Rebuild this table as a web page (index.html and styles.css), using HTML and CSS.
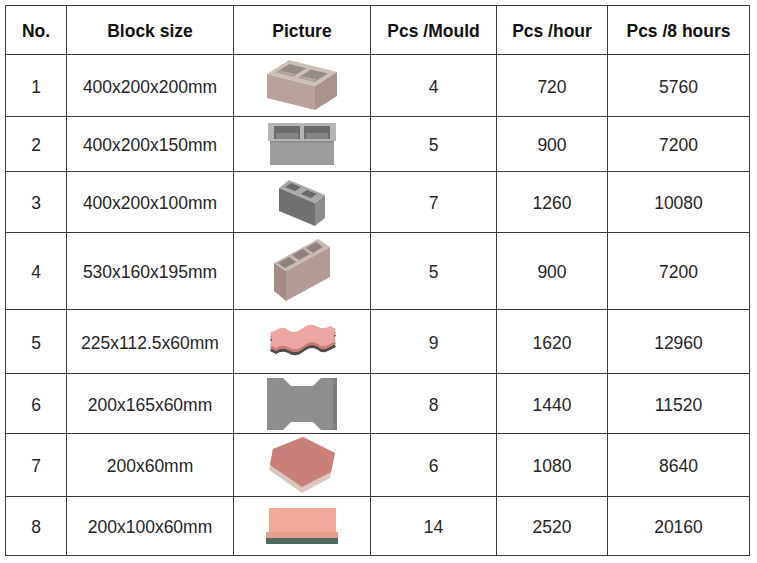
FILE: index.html
```html
<!DOCTYPE html>
<html>
<head>
<meta charset="utf-8">
<link rel="stylesheet" href="styles.css">
</head>
<body>
<table class="spec">
  <colgroup>
    <col class="c-no"><col class="c-size"><col class="c-pic"><col class="c-mould"><col class="c-hour"><col class="c-8h">
  </colgroup>
  <thead>
    <tr class="r-head"><th>No.</th><th>Block size</th><th>Picture</th><th>Pcs /Mould</th><th>Pcs /hour</th><th>Pcs /8 hours</th></tr>
  </thead>
  <tbody>
    <tr class="r1"><td>1</td><td>400x200x200mm</td><td class="pic">
      <svg width="74" height="52" viewBox="0 0 74 52">
        <polygon points="2,14 50,26 50,50 2,38" fill="#b7a39b"/>
        <polygon points="50,26 72,12 72,36 50,50" fill="#a8948d"/>
        <polygon points="2,14 50,26 72,12 24,0" fill="#cbbfb8"/>
        <polygon points="11.2,12.4 28,16.6 41.2,8.2 24.4,4" fill="#958c87"/>
        <polygon points="32.8,17.8 49.6,22 62.8,13.6 46,9.4" fill="#958c87"/>
        <polygon points="11.2,12.4 28,16.6 30,14 14,10" fill="#b0a69f"/>
        <polygon points="32.8,17.8 49.6,22 51.6,19.4 35,15.4" fill="#b0a69f"/>
      </svg></td><td>4</td><td>720</td><td>5760</td></tr>
    <tr class="r2"><td>2</td><td>400x200x150mm</td><td class="pic">
      <svg width="68" height="42" viewBox="0 0 68 42">
        <rect x="2" y="16" width="64" height="26" fill="#9d9d9d"/>
        <rect x="0" y="0" width="68" height="18" fill="#b4b4b4"/>
        <rect x="6" y="3" width="26" height="13" fill="#6b6b6b"/>
        <rect x="36" y="3" width="26" height="13" fill="#6b6b6b"/>
        <rect x="8" y="10" width="22" height="6" fill="#858585"/>
        <rect x="38" y="10" width="22" height="6" fill="#858585"/>
        <rect x="2" y="18" width="64" height="2" fill="#8e8e8e"/>
      </svg></td><td>5</td><td>900</td><td>7200</td></tr>
    <tr class="r3"><td>3</td><td>400x200x100mm</td><td class="pic">
      <svg width="46" height="48" viewBox="0 0 46 48">
        <polygon points="0,10 36,25 36,48 0,33" fill="#707070"/>
        <polygon points="36,25 46,17 46,40 36,48" fill="#8c8c8c"/>
        <polygon points="0,10 10,2 46,17 36,25" fill="#a9a9a9"/>
        <polygon points="6,9 12,5 22,9 16,13" fill="#6a6a6a"/>
        <polygon points="22,16 28,12 38,16 32,20" fill="#6a6a6a"/>
      </svg></td><td>7</td><td>1260</td><td>10080</td></tr>
    <tr class="r4"><td>4</td><td>530x160x195mm</td><td class="pic">
      <svg width="60" height="64" viewBox="0 0 60 64">
        <polygon points="2,24 14,32 14,62 2,52" fill="#a28c85"/>
        <polygon points="14,32 58,8 58,38 14,62" fill="#b39c95"/>
        <polygon points="2,24 46,0 58,8 14,32" fill="#c6b9b2"/>
        <polygon points="6,24 17,18 24,23 13,29" fill="#8d827d"/>
        <polygon points="20,16 31,10 38,15 27,21" fill="#8d827d"/>
        <polygon points="34,9 44,3 51,8 41,14" fill="#8d827d"/>
      </svg></td><td>5</td><td>900</td><td>7200</td></tr>
    <tr class="r5"><td>5</td><td>225x112.5x60mm</td><td class="pic">
      <svg width="72" height="38" viewBox="0 0 72 38">
        <path d="M4,16 L12,12 Q18,9 22,13 Q28,17 34,13 L40,9 Q46,6 52,10 Q58,13 64,9 L70,12 Q66,18 70,24 L62,28 Q56,31 52,27 Q46,23 40,27 L34,31 Q28,34 22,30 Q16,27 10,31 L4,28 Q8,22 4,16 Z" fill="#4e4a4a"/>
        <path d="M4,13 L12,9 Q18,6 22,10 Q28,14 34,10 L40,6 Q46,3 52,7 Q58,10 64,6 L70,9 Q66,15 70,21 L62,25 Q56,28 52,24 Q46,20 40,24 L34,28 Q28,31 22,27 Q16,24 10,28 L4,25 Q8,19 4,13 Z" fill="#c57d78"/>
        <path d="M4,10 L12,6 Q18,3 22,7 Q28,11 34,7 L40,3 Q46,0 52,4 Q58,7 64,3 L70,6 Q66,12 70,18 L62,22 Q56,25 52,21 Q46,17 40,21 L34,25 Q28,28 22,24 Q16,21 10,25 L4,22 Q8,16 4,10 Z" fill="#eda5a3"/>
      </svg></td><td>9</td><td>1620</td><td>12960</td></tr>
    <tr class="r6"><td>6</td><td>200x165x60mm</td><td class="pic">
      <svg width="70" height="52" viewBox="0 0 70 52">
        <path d="M0,0 L16,0 L24,8 L46,8 L54,0 L70,0 L70,52 L54,52 L46,44 L24,44 L16,52 L0,52 Z" fill="#8e8e8e"/>
        <path d="M66,0 L70,0 L70,52 L66,52 Z" fill="#7d7d7d"/>
      </svg></td><td>8</td><td>1440</td><td>11520</td></tr>
    <tr class="r7"><td>7</td><td>200x60mm</td><td class="pic">
      <svg width="66" height="56" viewBox="0 0 66 56">
        <polygon points="34,0 66,16 61,41 33,56 0,33 4,12" fill="#dcc6bf"/>
        <polygon points="34,0 66,16 62,35 33,50 1,28 4,12" fill="#c97f7a"/>
      </svg></td><td>6</td><td>1080</td><td>8640</td></tr>
    <tr class="r8"><td>8</td><td>200x100x60mm</td><td class="pic">
      <svg width="72" height="36" viewBox="0 0 72 36">
        <rect x="3" y="0" width="67" height="25" fill="#f0a898"/>
        <rect x="0" y="24" width="72" height="6" fill="#e59e8f"/>
        <rect x="0" y="30" width="72" height="6" fill="#51685f"/>
      </svg></td><td>14</td><td>2520</td><td>20160</td></tr>
  </tbody>
</table>
</body>
</html>
```

FILE: styles.css
```css
html, body {
  margin: 0;
  padding: 0;
  background: #ffffff;
}
body {
  padding: 5px 0 0 5px;
  font-family: "Liberation Sans", Arial, sans-serif;
  color: #262626;
}
.spec {
  border-collapse: collapse;
  table-layout: fixed;
  width: 745px;
}
.spec th, .spec td {
  border: 1px solid #3c3c3c;
  padding: 3px 0 0 0;
  text-align: center;
  vertical-align: middle;
  font-size: 17.5px;
}
.spec td.pic {
  padding: 0;
}
.spec th {
  font-weight: bold;
  color: #111111;
}
.c-no { width: 61px; }
.c-size { width: 167px; }
.c-pic { width: 137px; }
.c-mould { width: 126px; }
.c-hour { width: 111px; }
.c-8h { width: 142px; }
.pic svg {
  display: block;
  margin: 0 auto;
}
.r-head { height: 49px; }
.r1 { height: 62px; }
.r2 { height: 55px; }
.r3 { height: 61px; }
.r4 { height: 77px; }
.r5 { height: 64px; }
.r6 { height: 60px; }
.r7 { height: 63px; }
.r8 { height: 59px; }
```
